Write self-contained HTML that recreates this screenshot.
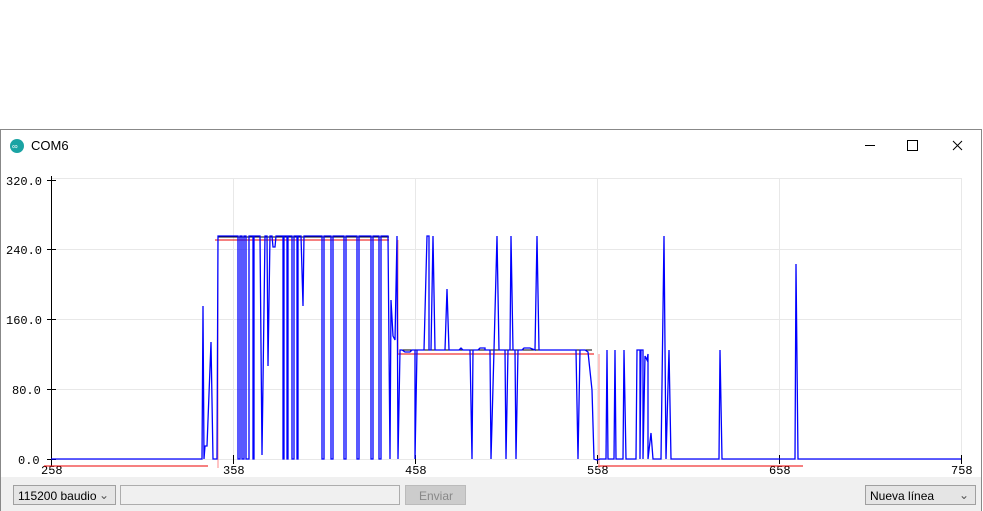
<!DOCTYPE html>
<html><head><meta charset="utf-8"><style>
body{margin:0;width:983px;height:510px;overflow:hidden;background:#fff;font-family:"Liberation Sans",sans-serif;position:relative}
.win{position:absolute;left:0;top:129px;width:980px;height:381px;border:1px solid #888;border-bottom:none;background:#fff}
.title{position:absolute;left:30px;top:8px;font-size:13px;color:#000}
.logo{position:absolute;left:9px;top:9px;width:14px;height:14px;border-radius:50%;background:#1aa3a3}
.bar{position:absolute;left:0;top:347px;width:980px;height:34px;background:#f0f0f0}
.sel{position:absolute;top:8px;height:20px;border:1px solid #a0a0a0;background:#e5e5e5;font-size:12px;line-height:20px;box-sizing:border-box;padding-left:4px}
</style></head><body>
<div class="win">
<div class="logo"><svg width="14" height="14"><text x="2" y="10" font-size="8" fill="#fff" font-family="Liberation Sans">∞</text></svg></div>
<div class="title">COM6</div>
<svg style="position:absolute;left:860px;top:8px" width="110" height="16">
<line x1="4" y1="7.5" x2="14" y2="7.5" stroke="#000"/>
<rect x="46.5" y="2.5" width="10" height="10" fill="none" stroke="#000"/>
<path d="M92 3L101 12M101 3L92 12" stroke="#000"/>
</svg>
<div class="bar">
<div class="sel" style="left:12px;width:103px">115200 baudio<span style="position:absolute;right:6px;top:-1px;color:#555">&#8964;</span></div>
<div class="sel" style="left:119px;width:280px;background:#f0f0f0;border-color:#adadad"></div>
<div class="sel" style="left:404px;width:61px;background:#ccc;border-color:#bbb;color:#888;padding-left:13px">Enviar</div>
<div class="sel" style="left:864px;width:111px">Nueva línea<span style="position:absolute;right:6px;top:-1px;color:#555">&#8964;</span></div>
</div>
</div>
<svg style="position:absolute;left:0;top:0" width="983" height="478" font-family="Liberation Mono,monospace" font-size="12">
<g stroke="#e8e8e8" fill="none">
<rect x="51.5" y="178.5" width="910" height="281"/>
<line x1="51" y1="249.5" x2="961" y2="249.5"/><line x1="51" y1="319.5" x2="961" y2="319.5"/><line x1="51" y1="389.5" x2="961" y2="389.5"/>
<line x1="233.5" y1="178" x2="233.5" y2="459"/><line x1="415.5" y1="178" x2="415.5" y2="459"/><line x1="597.5" y1="178" x2="597.5" y2="459"/><line x1="779.5" y1="178" x2="779.5" y2="459"/>
</g>
<g stroke="#000">
<line x1="51.5" y1="176" x2="51.5" y2="466"/>
<line x1="47" y1="180.5" x2="56" y2="180.5"/><line x1="47" y1="249.5" x2="56" y2="249.5"/><line x1="47" y1="319.5" x2="56" y2="319.5"/><line x1="47" y1="389.5" x2="56" y2="389.5"/><line x1="47" y1="459.5" x2="56" y2="459.5"/>
<line x1="233.5" y1="455" x2="233.5" y2="464"/><line x1="415.5" y1="455" x2="415.5" y2="464"/><line x1="597.5" y1="455" x2="597.5" y2="464"/><line x1="779.5" y1="455" x2="779.5" y2="464"/><line x1="961.5" y1="455" x2="961.5" y2="464"/>
</g>
<g fill="#000">
<text x="6" y="185">320.0</text><text x="6" y="254">240.0</text><text x="6" y="324">160.0</text><text x="12" y="394">80.0</text><text x="18" y="464">0.0</text>
<text x="41" y="474">258</text><text x="223" y="474">358</text><text x="405" y="474">458</text><text x="587" y="474">558</text><text x="769" y="474">658</text><text x="951" y="474">758</text>
</g>
<path d="M218 237H389M400 350H592" stroke="#000" fill="none"/>
<path d="M44 466H208M215 240H389M398 354H594M598 466H803" stroke="#e00" fill="none"/>
<path d="M218 240V468M599 354V468M398 240V354" stroke="#f88" fill="none"/>
<path fill="none" stroke="#00f" stroke-width="1.3" d="M51 459H202L203 306L204 459L205 446H207L211 342L213 459H217L218 236H238V459H240V236H242V459H244V236H246V459H249V236H253V459H254V236H260L262 455L265 236H267L268 366L270 236H272L273 247H275L276 236H283V459H284V236H287V459H288V236H292V459H294V236H297V459H298V236H301L303 306L304 236H322V459H324V236H331V459H333V236H344V459H346V236H357V459H359V236H371V459H373V236H379V459H381V236H388L390 459L391 300L393 336L395 340L397 236L398 459L400 350L402 350L405 352H410L412 350H415V459L417 350H424L427 236H429V350H431L433 236L435 350H445L447 289L449 350H459L461 348L463 350H470L472 459L473 350H478L480 348H485V350H490L491 459L494 350L497 236L499 350H505L506 459L508 350H510L511 236L513 350H515L516 459L518 350H522L524 348H530L535 350L537 236L539 350H576L578 459L580 350H585L588 352L592 390L594 459L597 460L600 459H606L607 350L608 459H614L615 350L616 459H623L624 350L626 459H636L637 350H640V459L641 350H643V459L645 356L647 360L648 354V459L651 433L653 459H661L664 236L666 459L669 350L671 459H719L720 350L722 459H795L796 264L798 459H961"/>
</svg>
</body></html>
